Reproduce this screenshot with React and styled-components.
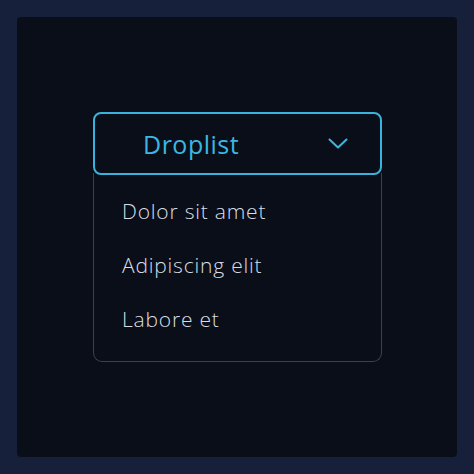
import React from "react";
import styled, { createGlobalStyle } from "styled-components";

const Global = createGlobalStyle`
  html, body { margin: 0; padding: 0; background: #17203a; }
  body { width: 474px; height: 474px; overflow: hidden; }
  * { box-sizing: border-box; }
`;

const Frame = styled.div`
  width: 474px;
  height: 474px;
  padding: 17px;
  background: #17203a;
`;

const Panel = styled.div`
  width: 440px;
  height: 440px;
  background: #0a0e18;
  border-radius: 4px;
  padding: 95px 0 0 76px;
  font-family: "Open Sans", "Liberation Sans", sans-serif;
`;

const Dropdown = styled.div`
  width: 289px;
  display: flex;
  flex-direction: column;
`;

const Trigger = styled.button`
  height: 63px;
  display: flex;
  align-items: center;
  justify-content: space-between;
  padding: 0 32px 0 48px;
  background: #0a0e18;
  border: 2px solid #3ab3dc;
  border-radius: 8px;
  color: #3cb6e2;
  font-family: inherit;
  font-size: 25px;
  font-weight: 400;
  letter-spacing: 0.5px;
  cursor: pointer;
  position: relative;
  z-index: 1;
`;

const List = styled.ul`
  list-style: none;
  margin: -2px 0 0;
  padding: 11px 0 15px;
  border: 1px solid #3a4252;
  border-top: none;
  border-radius: 0 0 9px 9px;
  background: #0a0e18;
`;

const Item = styled.li`
  height: 54px;
  display: flex;
  align-items: center;
  padding-left: 28px;
  color: #d9dee6;
  font-size: 21px;
  font-weight: 300;
  letter-spacing: 0.8px;
`;

const Chevron = () => (
  <svg width="20" height="12" viewBox="0 0 20 12" fill="none">
    <path d="M1.5 1.5 L10 9.5 L18.5 1.5" stroke="#3cb6e2" strokeWidth="2" strokeLinecap="round" strokeLinejoin="round" />
  </svg>
);

const options = ["Dolor sit amet", "Adipiscing elit", "Labore et"];

export default function App() {
  return (
    <>
      <Global />
      <Frame>
        <Panel>
          <Dropdown>
            <Trigger>
              <span>Droplist</span>
              <Chevron />
            </Trigger>
            <List>
              {options.map((o) => (
                <Item key={o}>{o}</Item>
              ))}
            </List>
          </Dropdown>
        </Panel>
      </Frame>
    </>
  );
}
